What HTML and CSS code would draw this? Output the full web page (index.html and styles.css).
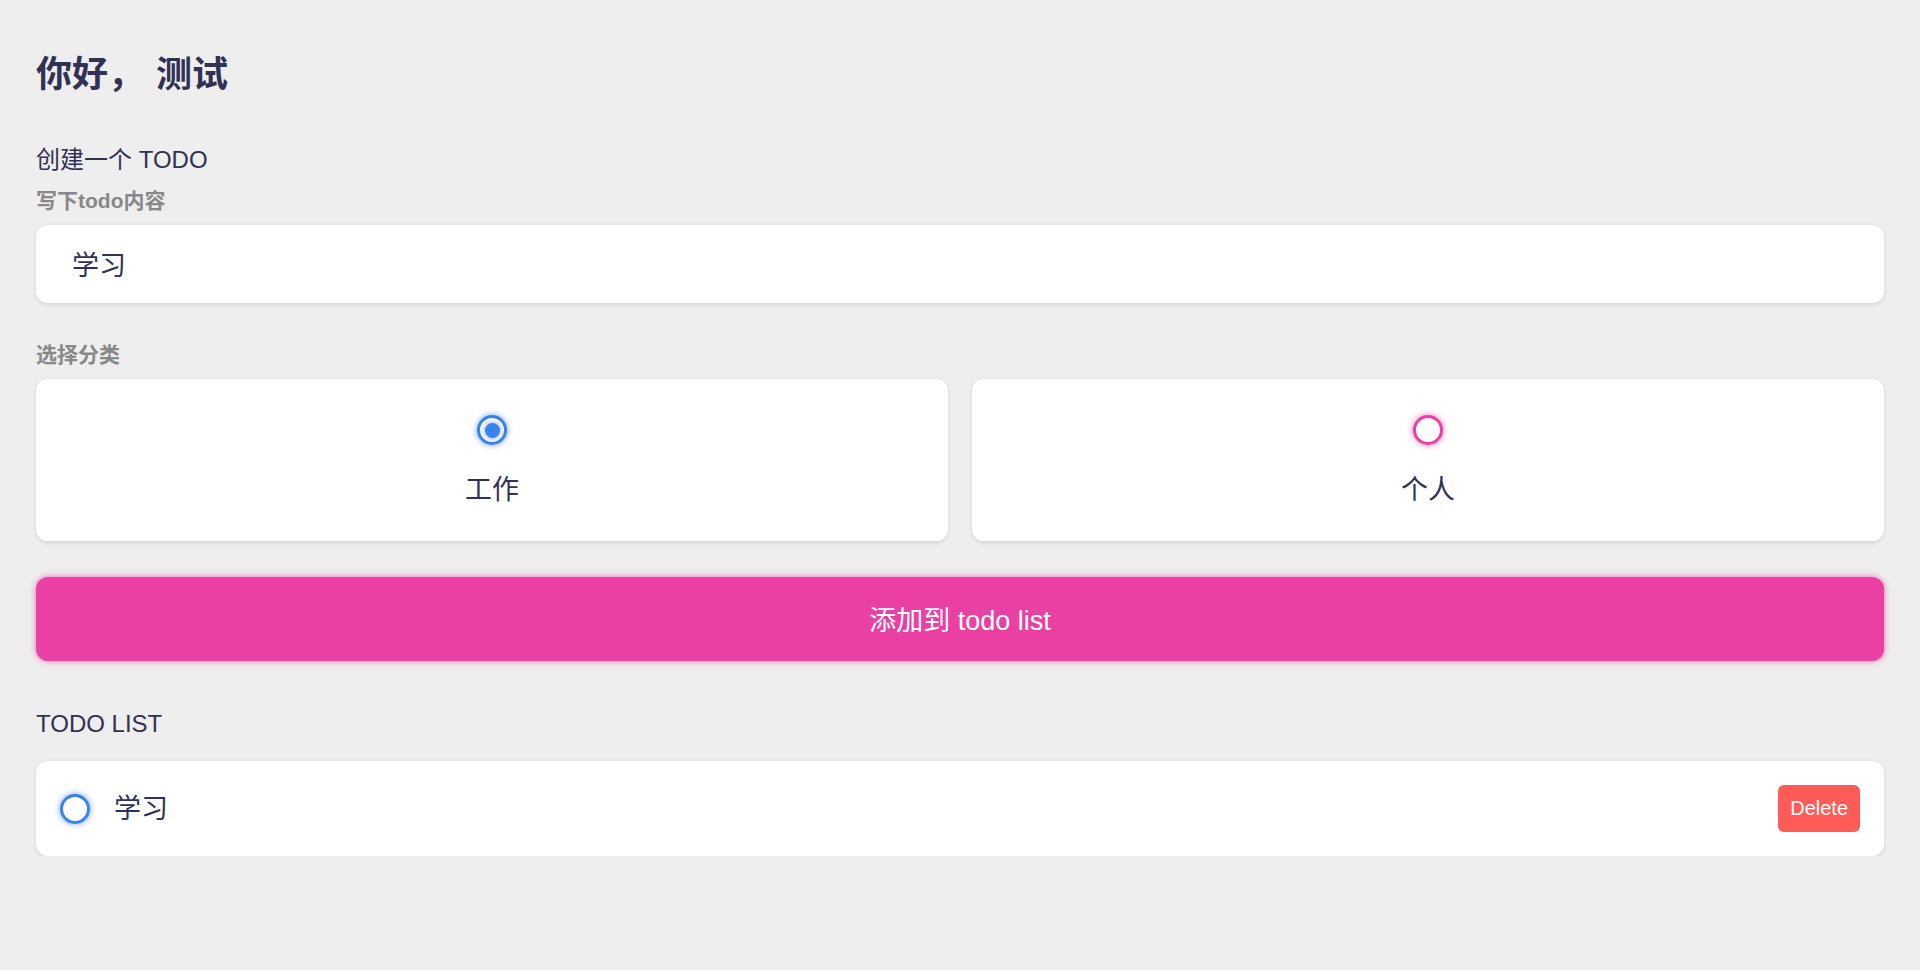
FILE: index.html
```html
<!DOCTYPE html>
<html lang="zh">
<head>
<meta charset="utf-8">
<title>Todo</title>
<link rel="stylesheet" href="styles.css">
</head>
<body>
<main class="app">
  <section class="greeting">
    <h2 class="title">你好，<span class="name">测试</span></h2>
  </section>

  <section class="create-todo">
    <h3 class="section-title">创建一个 TODO</h3>
    <form class="create-form">
      <h4 class="field-label">写下todo内容</h4>
      <input class="content-input" type="text" value="学习">

      <h4 class="field-label category-label">选择分类</h4>
      <div class="options">
        <label class="option">
          <span class="bubble business checked"></span>
          <span class="option-text">工作</span>
        </label>
        <label class="option">
          <span class="bubble personal"></span>
          <span class="option-text">个人</span>
        </label>
      </div>

      <button class="submit" type="button">添加到 todo list</button>
    </form>
  </section>

  <section class="todo-list">
    <h3 class="section-title list-title">TODO LIST</h3>
    <div class="list">
      <div class="todo-item">
        <span class="bubble business"></span>
        <span class="todo-content">学习</span>
        <div class="actions">
          <button class="delete" type="button">Delete</button>
        </div>
      </div>
    </div>
  </section>
</main>
</body>
</html>
```

FILE: styles.css
```css
* {
  margin: 0;
  padding: 0;
  box-sizing: border-box;
}

body {
  background: #eeeeee;
  color: #313154;
  font-family: "Liberation Sans", Arial, "Noto Sans CJK SC", sans-serif;
}

.app {
  padding: 0 36px;
}

/* greeting */
.greeting {
  margin-top: 48px;
  margin-bottom: 43px;
}

.title {
  font-size: 36px;
  line-height: 54px;
  font-weight: 700;
  color: #313154;
}

.title .name {
  margin-left: 12px;
}

/* headings */
.section-title {
  font-size: 24px;
  line-height: 30px;
  font-weight: 400;
  color: #313154;
  margin-bottom: 13px;
}

.field-label {
  font-size: 21px;
  line-height: 26px;
  font-weight: 700;
  color: #888888;
  margin-bottom: 11px;
}

.category-label {
  margin-top: 39px;
}

/* input */
.content-input {
  display: block;
  width: 100%;
  appearance: none;
  border: none;
  outline: none;
  font-family: "Liberation Sans", Arial, "Noto Sans CJK SC", sans-serif;
  font-size: 27px;
  line-height: 30px;
  height: 78px;
  padding: 23px 36px 25px;
  color: #313154;
  background: #ffffff;
  border-radius: 12px;
  box-shadow: 0 1.5px 4.5px rgba(0, 0, 0, 0.1);
}

/* options */
.options {
  display: grid;
  grid-template-columns: repeat(2, 1fr);
  gap: 24px;
  margin-bottom: 36px;
}

.option {
  display: flex;
  flex-direction: column;
  align-items: center;
  background: #ffffff;
  padding: 36px 36px 33px;
  border-radius: 12px;
  box-shadow: 0 1.5px 4.5px rgba(0, 0, 0, 0.1);
}

.option-text {
  margin-top: 27px;
  font-size: 27px;
  line-height: 36px;
  color: #313154;
}

/* bubbles */
.bubble {
  display: flex;
  align-items: center;
  justify-content: center;
  flex: none;
  width: 30px;
  height: 30px;
  border-radius: 50%;
  border: 3px solid #3a82ee;
  box-shadow: 0 0 6px rgba(58, 130, 238, 0.75);
  background: #ffffff;
}

.bubble.personal {
  border-color: #ea40a4;
  box-shadow: 0 0 6px rgba(234, 64, 164, 0.75);
}

.bubble.checked::after {
  content: "";
  display: block;
  width: 15px;
  height: 15px;
  border-radius: 50%;
  background: #3a82ee;
  box-shadow: 0 0 6px rgba(58, 130, 238, 0.75);
}

/* submit */
.submit {
  display: block;
  width: 100%;
  appearance: none;
  border: none;
  outline: none;
  font-family: "Liberation Sans", Arial, "Noto Sans CJK SC", sans-serif;
  font-size: 27px;
  line-height: 36px;
  font-weight: 400;
  padding: 26px 36px 22px;
  color: #ffffff;
  background: #ea40a4;
  border-radius: 12px;
  box-shadow: 0 0 6px rgba(234, 64, 164, 0.75);
}

/* todo list */
.todo-list {
  margin-top: 48px;
}

.list-title {
  margin-bottom: 22px;
}

.todo-item {
  display: flex;
  align-items: center;
  background: #ffffff;
  padding: 24px;
  border-radius: 12px;
  box-shadow: 0 1.5px 4.5px rgba(0, 0, 0, 0.1);
}

.todo-content {
  flex: 1 1 0%;
  margin-left: 24px;
  font-size: 27px;
  line-height: 36px;
  color: #313154;
}

.actions {
  display: flex;
  align-items: center;
}

.delete {
  display: block;
  appearance: none;
  border: none;
  outline: none;
  font-family: "Liberation Sans", Arial, sans-serif;
  font-size: 20px;
  line-height: 23px;
  padding: 12px;
  color: #ffffff;
  background: #ff5b57;
  border-radius: 6px;
}
```
